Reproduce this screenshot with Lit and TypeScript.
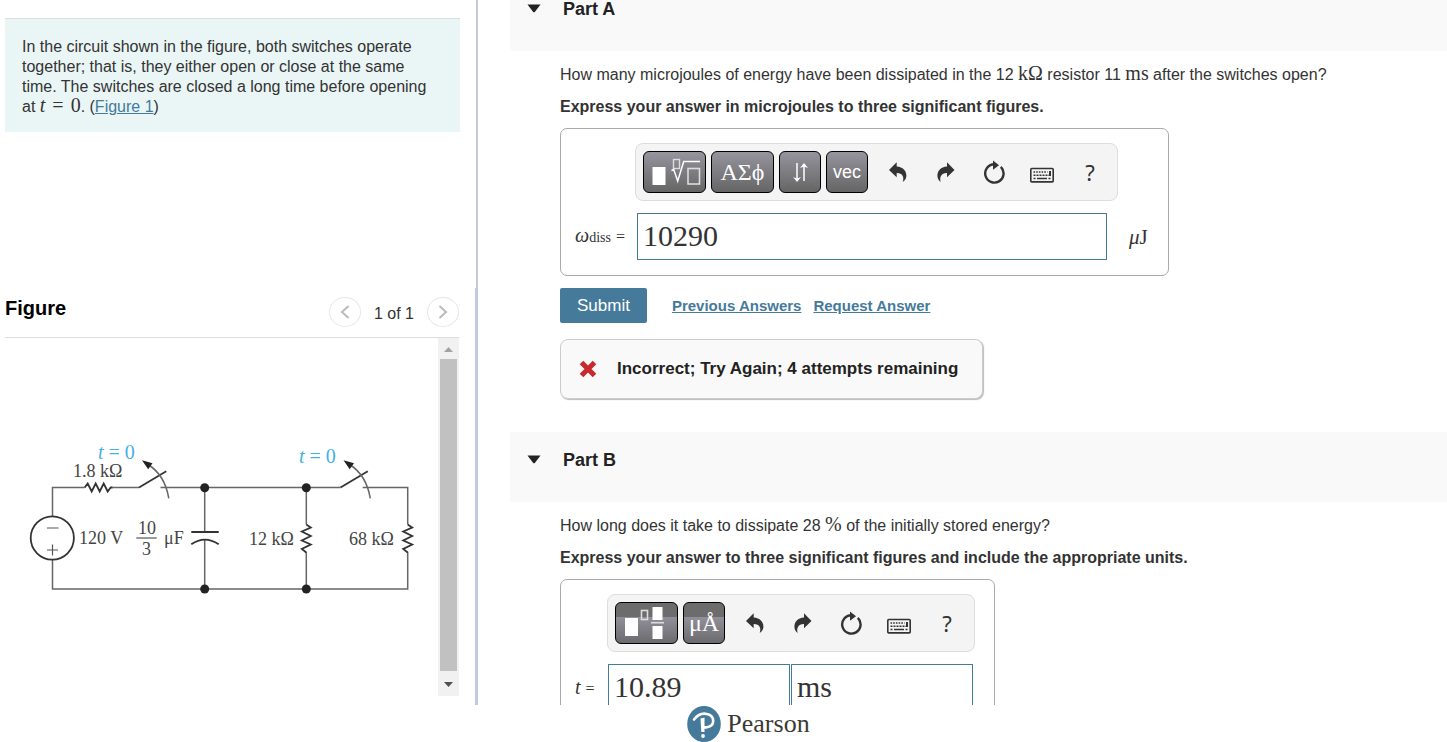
import { LitElement, html, css, svg } from "lit";
import { customElement, property } from "lit/decorators.js";

const undoIcon = html`<svg viewBox="0 0 24 24" width="24" height="24" aria-hidden="true">
  <path fill="#333" d="M3 10 10.7 2.3V6.4C17 7 20.4 10.6 20.4 15.6c0 2.9-1.4 5.2-3.7 6.4 1.9-4.900-.4-9.200-6-9V17.200Z" />
</svg>`;

const redoIcon = html`<svg viewBox="0 0 24 24" width="24" height="24" aria-hidden="true">
  <path fill="#333" d="M20.500 10 13 2.300V6.400C6.700 7 3.400 10.600 3.400 15.600c0 2.900 1.200 5.200 3.300 6.400-1.500-4.900.8-9.200 6.300-9V17.200Z" />
</svg>`;

const resetIcon = html`<svg viewBox="0 0 24 24" width="24" height="24" aria-hidden="true">
  <path fill="none" stroke="#333" stroke-width="2.400" d="M12.500 4.200A9.200 9.200 0 1 0 18.800 6.800" />
  <path fill="#333" d="M11 .5 17 5.200 11 9.700Z" />
</svg>`;

const keyboardIcon = html`<svg viewBox="0 0 24 24" width="24" height="24" aria-hidden="true">
  <rect x=".8" y="8.500" width="22.400" height="13.400" rx="1" fill="none" stroke="#333" stroke-width="1.600" />
  <path stroke="#333" stroke-width="1.500" d="M3.500 12h14" stroke-dasharray="1.600 1.100" />
  <path stroke="#333" stroke-width="1.500" d="M3.500 15.200h17" stroke-dasharray="2 1" />
  <path stroke="#333" stroke-width="2" d="M20 11v5" />
  <path stroke="#333" stroke-width="1.500" d="M3.500 18.500h2M7 18.500h10M18.500 18.500h2" />
</svg>`;

const rootIcon = html`<svg viewBox="0 0 61 40" width="61" height="40" aria-hidden="true">
  <rect x="8.500" y="15" width="13" height="18" fill="#fff" />
  <rect x="29.500" y="7.500" width="6" height="9" fill="none" stroke="#ddd" stroke-width="1.400" />
  <path d="M27.500 18.500l2.200-1 4 11.500L39.700 9.500H56" fill="none" stroke="#fff" stroke-width="1.500" />
  <rect x="44" y="16.500" width="11.500" height="15.500" fill="none" stroke="#ddd" stroke-width="1.600" />
</svg>`;

const templateIcon = html`<svg viewBox="0 0 61 40" width="61" height="40" aria-hidden="true">
  <rect x="9" y="15" width="13" height="18" fill="#fff" />
  <rect x="25.500" y="7.500" width="6" height="9" fill="none" stroke="#ddd" stroke-width="1.600" />
  <rect x="36.500" y="4" width="10" height="13" fill="#fff" />
  <path d="M35 19.700h13" stroke="#ddd" stroke-width="1.600" />
  <rect x="36.500" y="23" width="10" height="13" fill="#fff" />
</svg>`;

@customElement("circuit-figure")
class CircuitFigure extends LitElement {
  static styles = css`
    :host { display: block; }
    .drawing { display: block; }
    .label { font: 18px "Liberation Serif", serif; fill: #444; }
    .blue { fill: #45b0e6; font-size: 20px; }
    .it { font-style: italic; }
    .wire { fill: none; stroke: #666; stroke-width: 1.500; }
    .part { fill: none; stroke: #333; stroke-width: 1.800; }
    .sign { stroke: #555; stroke-width: 1.200; }
    .node { fill: #222; }
  `;
  private toggle(x: number) {
    return svg`<g transform=${`translate(${x} 0)`}>
      <path class="part" d="M0 47.500 27.300 31.300" />
      <path class="wire" d="M29.800 58.300C27 42 19.500 31 9 24.500" />
      <path class="node" d="M3 20.300 13.500 23.200 9.200 29.200Z" />
    </g>`;
  }
  render() {
    return html`<svg class="drawing" viewBox="0 0 400 160" width="400" height="160" role="img" aria-label="Circuit diagram">
      <path class="wire" d="M32.500 77V47.500H64.700M92.700 47.500H119M140.500 47.500H320.500M342.700 47.500H387.700V84.500M387.700 112V149H32.500V119.500M184.700 47.500V92M184.700 99.500V149M286.300 47.500V84.500M286.300 112V149" />
      <path class="part" d="M64.700 47.500l3-4 4 8 4-8 4 8 4-8 4 8 3-4h2" />
      <path class="part" d="M286.300 84.500l4.500 3-9 4 9 4.500-9 4.500 9 4-9 4.500 4.500 3.500" />
      <path class="part" d="M387.700 84.500l4.500 3-9 4 9 4.500-9 4.500 9 4-9 4.500 4.500 3.500" />
      <circle class="part" cx="32.300" cy="98" r="21.600" />
      <path class="sign" d="M27 88h11.500M27 110h11M32.500 104.500v11" />
      <path class="part" d="M171.300 92h27.400M171.300 104.300q13.400-9.500 27.400 0" />
      ${this.toggle(119)} ${this.toggle(320.5)}
      <circle class="node" cx="184.700" cy="47.700" r="4.500" />
      <circle class="node" cx="184.700" cy="149" r="4.500" />
      <circle class="node" cx="286.300" cy="47.700" r="4.500" />
      <circle class="node" cx="286.300" cy="149" r="4.500" />
      <text class="label blue" x="78" y="19"><tspan class="it">t</tspan> = 0</text>
      <text class="label blue" x="279" y="23"><tspan class="it">t</tspan> = 0</text>
      <text class="label" x="53" y="37">1.8 kΩ</text>
      <text class="label" x="59" y="104">120 V</text>
      <text class="label" x="118" y="94">10</text>
      <path class="sign" d="M116.300 98h20.400" />
      <text class="label" x="122" y="115">3</text>
      <text class="label" x="144" y="104">μF</text>
      <text class="label" x="229" y="105">12 kΩ</text>
      <text class="label" x="329" y="105">68 kΩ</text>
    </svg>`;
  }
}

@customElement("equation-toolbar")
class EquationToolbar extends LitElement {
  @property() kind = "symbols";
  static styles = css`
    :host { display: block; }
    .bar {
      box-sizing: border-box; display: flex; align-items: center; height: 58px;
      padding: 0 3px 0 7px; border: 1px solid #ddd; border-radius: 8px; background: #f4f4f4;
    }
    .keys { display: flex; gap: 5px; margin-right: 6px; }
    button { margin: 0; padding: 0; font: 18px "Liberation Sans", Arial, sans-serif; cursor: pointer; }
    .key {
      box-sizing: border-box; width: 42px; height: 42px; border: 1px solid #000; border-radius: 6px;
      background: linear-gradient(#96949e, #656565); color: #fff;
    }
    .key svg { display: block; }
    .wide { width: 63px; }
    .template { background: linear-gradient(#6c6c6c 0, #6c6c6c 34%, #92909a 35%, #6b6b6e 100%); }
    .greek { font: 24px "Liberation Serif", serif; }
    .tool {
      display: flex; align-items: center; justify-content: center; width: 48px; height: 42px;
      border: 0; background: none; color: #333; font-size: 24px;
    }
    .help { font-family: "Noto Sans", sans-serif; font-size: 22px; }
  `;
  render() {
    return html`<div class="bar" role="toolbar" aria-label="Equation tools">
      <div class="keys">
        ${this.kind === "symbols"
          ? html`<button class="key wide" aria-label="Templates">${rootIcon}</button>
              <button class="key wide greek">ΑΣϕ</button>
              <button class="key" aria-label="Arrows">
                <svg viewBox="0 0 40 40" width="40" height="40" aria-hidden="true">
                  <path fill="none" stroke="#fff" stroke-width="1.500" d="M17 11v17M24 29V12" />
                  <path fill="#fff" d="M17 30l-4-5 4 1.500 4-1.500ZM24 11l-4 5 4-1.500 4 1.500Z" />
                </svg>
              </button>
              <button class="key">vec</button>`
          : html`<button class="key wide template" aria-label="Templates">${templateIcon}</button>
              <button class="key template greek">μÅ</button>`}
      </div>
      <button class="tool" aria-label="Undo">${undoIcon}</button>
      <button class="tool" aria-label="Redo">${redoIcon}</button>
      <button class="tool" aria-label="Reset">${resetIcon}</button>
      <button class="tool" aria-label="Keyboard shortcuts">${keyboardIcon}</button>
      <button class="tool help">?</button>
    </div>`;
  }
}

@customElement("app-root")
class AppRoot extends LitElement {
  static styles = css`
    :host {
      display: grid; grid-template-rows: minmax(0, 1fr) auto; height: 100vh; overflow: hidden;
      background: #fff; color: #333; font: 16px/20px "Liberation Sans", Arial, sans-serif;
    }
    a { color: #457a9b; }
    h2, p { margin: 0; }
    .columns { display: grid; grid-template-columns: 478px minmax(0, 1fr); min-height: 0; }
    .side { display: grid; grid-template-rows: 288px minmax(0, 1fr); min-height: 0; }
    .problem { box-sizing: border-box; padding: 18px 16px 0 5px; border-right: 2px solid #c1cbdf; }
    .intro { padding: 18px 24px 15px 17px; border-top: 1px solid #ddd; background: #eaf6f6; }
    .math { font-family: "Liberation Serif", serif; font-size: 20px; line-height: 16px; }
    .it { font-style: italic; }
    .rel { margin: 0 2px; }
    .figure { display: flex; flex-direction: column; box-sizing: border-box; padding: 0 16px 9px 5px; border-right: 3px solid #c1cbdf; min-height: 0; }
    .figure-head { display: flex; align-items: center; height: 49px; border-bottom: 1px solid #ddd; }
    .figure-title { flex: 1; padding-bottom: 10px; font-size: 20px; line-height: 24px; color: #000; }
    .pager { display: flex; align-items: center; gap: 13px; padding-bottom: 2px; }
    .count { padding-top: 4px; }
    .round {
      display: flex; align-items: center; justify-content: center; box-sizing: border-box; width: 32px; height: 30px;
      padding: 0; border: 1px solid #e6e6e6; border-radius: 50%; background: #fff;
    }
    .figure-body { display: flex; flex: 1; min-height: 0; }
    .canvas { flex: 1; min-width: 0; padding: 102px 0 0 15px; overflow: hidden; }
    .scrollbar { display: flex; flex-direction: column; width: 21px; background: #f1f1f1; }
    .arrow { display: block; height: 21px; }
    .thumb { flex: 1; margin: 0 2px; background: #c1c1c1; }
    .bottom { height: 25px; }
    .content { overflow: hidden; padding-left: 32px; }
    .parts { margin-top: -19px; }
    .part-head {
      display: flex; gap: 22px; box-sizing: border-box; height: 70px; padding: 16px 0 0 17px;
      background: #f9f9f9; color: #222;
    }
    .part-title { font-size: 18px; line-height: 24px; }
    .caret { margin-top: 7px; }
    .part-body { padding: 12px 0 33px 50px; }
    .question { line-height: 24px; }
    .instruction { margin: 8px 0 9px; font-weight: bold; line-height: 24px; }
    .answer {
      display: inline-grid; grid-template-columns: 60px auto auto; align-items: center; row-gap: 12px; box-sizing: border-box;
      padding: 14px 19px 15px 14px; border: 1px solid #aaa; border-radius: 7px;
    }
    .answer-b { grid-template-columns: 32px auto; }
    .tools { grid-column: 2; }
    .fields { display: flex; gap: 1px; grid-column: 2; padding: 0 11px 0 2px; }
    .answer-b .fields { padding: 0 2px 0 1px; }
    .field {
      flex: 1; box-sizing: border-box; width: 0; min-width: 0; height: 47px; padding: 0 5px 2px; border: 1px solid #457a9b;
      border-radius: 0; background: #fff; color: #333; font: 30px "Liberation Serif", serif;
    }
    .lead { grid-column: 1; font-family: "Liberation Serif", serif; font-size: 20px; white-space: nowrap; }
    .lead .small { font-size: 14px; }
    .lead .eq { font-size: 16px; }
    .unit { font-family: "Liberation Serif", serif; font-size: 21px; padding: 0 1px 0 11px; }
    .actions { display: flex; align-items: center; margin-top: 12px; font-size: 15px; font-weight: bold; }
    .submit {
      height: 35px; padding: 0 17px; margin-right: 25px; border: 0; border-radius: 2px; background: #457a9b;
      color: #fff; font: 17px "Liberation Sans", Arial, sans-serif;
    }
    .actions a + a { margin-left: 12px; }
    .feedback {
      display: inline-flex; align-items: center; gap: 20px; box-sizing: border-box; height: 60px; margin-top: 16px;
      padding: 0 24px 0 18px; border: 1px solid #ccc; border-radius: 8px; background: #f9f9f9;
      box-shadow: 1px 1px 1px #bbb; color: #222; font-size: 17px; font-weight: bold; vertical-align: top;
    }
    .footer { display: flex; align-items: center; justify-content: center; gap: 6px; height: 37px; padding-left: 50px; }
    .brand { color: #3b3935; font: 26px/36px "Liberation Serif", serif; }
  `;
  private heading(title: string) {
    return html`<div class="part-head">
      <svg class="caret" viewBox="0 0 14 9" width="14" height="9" aria-hidden="true"><path fill="#222" d="M.5.500h13L8 7.700q-1 1-2 0Z" /></svg>
      <h2 class="part-title">${title}</h2>
    </div>`;
  }
  render() {
    return html`
      <div class="columns">
        <aside class="side">
          <section class="problem">
            <p class="intro">
              In the circuit shown in the figure, both switches operate together; that is, they either open or close at
              the same time. The switches are closed a long time before opening at
              <span class="math it">t</span><span class="math rel"> = </span><span class="math">0</span>. (<a href="#figure">Figure 1</a>)
            </p>
          </section>
          <section class="figure" id="figure">
            <div class="figure-head">
              <h2 class="figure-title">Figure</h2>
              <div class="pager">
                <button class="round" aria-label="Previous figure">
                  <svg viewBox="0 0 10 14" width="10" height="14"><path d="M8.500 1 2 7l6.500 6" fill="none" stroke="#bbb" stroke-width="2" /></svg>
                </button>
                <span class="count">1 of 1</span>
                <button class="round" aria-label="Next figure">
                  <svg viewBox="0 0 10 14" width="10" height="14"><path d="M1.500 1 8 7l-6.500 6" fill="none" stroke="#bbb" stroke-width="2" /></svg>
                </button>
              </div>
            </div>
            <div class="figure-body">
              <div class="canvas"><circuit-figure></circuit-figure></div>
              <div class="scrollbar" aria-hidden="true">
                <svg class="arrow" viewBox="0 0 21 21" width="21"><path fill="#a3a3a3" d="M6 14h9l-4.500-5Z" /></svg>
                <div class="thumb"></div>
                <svg class="arrow bottom" viewBox="0 0 21 25" width="21"><path fill="#505050" d="M6 11h9l-4.500 5Z" /></svg>
              </div>
            </div>
          </section>
        </aside>
        <main class="content">
          <div class="parts">
            <section>
              ${this.heading("Part A")}
              <div class="part-body">
                <p class="question">
                  How many microjoules of energy have been dissipated in the 12 <span class="math">kΩ</span> resistor 11
                  <span class="math">ms</span> after the switches open?
                </p>
                <p class="instruction">Express your answer in microjoules to three significant figures.</p>
                <div class="answer">
                  <equation-toolbar class="tools" kind="symbols"></equation-toolbar>
                  <label class="lead" for="energy"><span class="it">ω</span><span class="small">diss</span> <span class="eq">=</span></label>
                  <div class="fields"><input class="field" id="energy" type="text" value="10290" /></div>
                  <span class="unit"><span class="it">μ</span>J</span>
                </div>
                <div class="actions">
                  <button class="submit">Submit</button>
                  <a href="#previous">Previous Answers</a>
                  <a href="#request">Request Answer</a>
                </div>
                <div class="feedback" role="status">
                  <svg viewBox="0 0 18 18" width="18" height="18" aria-hidden="true"><path d="M2.500 2.500l13 13M15.500 2.500l-13 13" stroke="#c7292d" stroke-width="5" /></svg>
                  Incorrect; Try Again; 4 attempts remaining
                </div>
              </div>
            </section>
            <section>
              ${this.heading("Part B")}
              <div class="part-body">
                <p class="question">
                  How long does it take to dissipate 28 <span class="math">%</span> of the initially stored energy?
                </p>
                <p class="instruction">Express your answer to three significant figures and include the appropriate units.</p>
                <div class="answer answer-b">
                  <equation-toolbar class="tools" kind="units"></equation-toolbar>
                  <label class="lead" for="time"><span class="it">t</span> <span class="eq">=</span></label>
                  <div class="fields">
                    <input class="field" id="time" type="text" value="10.89" />
                    <input class="field" type="text" value="ms" aria-label="Units" />
                  </div>
                </div>
              </div>
            </section>
          </div>
        </main>
      </div>
      <footer class="footer">
        <svg viewBox="0 0 34 36" width="34" height="36" role="img" aria-label="Pearson logo">
          <ellipse cx="17" cy="18" rx="16.800" ry="18" fill="#457a9b" />
          <path d="M7 13.500C11 8.500 16 7 20 8c8 1.800 8.500 12 0 13.200-1.200.2-3 .2-4 0" fill="none" stroke="#fff" stroke-width="2.600" stroke-linecap="round" />
          <path d="M13.500 12.500 17.500 11.500V26h-3.200Z" fill="#fff" />
          <circle cx="16" cy="30" r="1.900" fill="#fff" />
        </svg>
        <span class="brand">Pearson</span>
      </footer>
    `;
  }
}
